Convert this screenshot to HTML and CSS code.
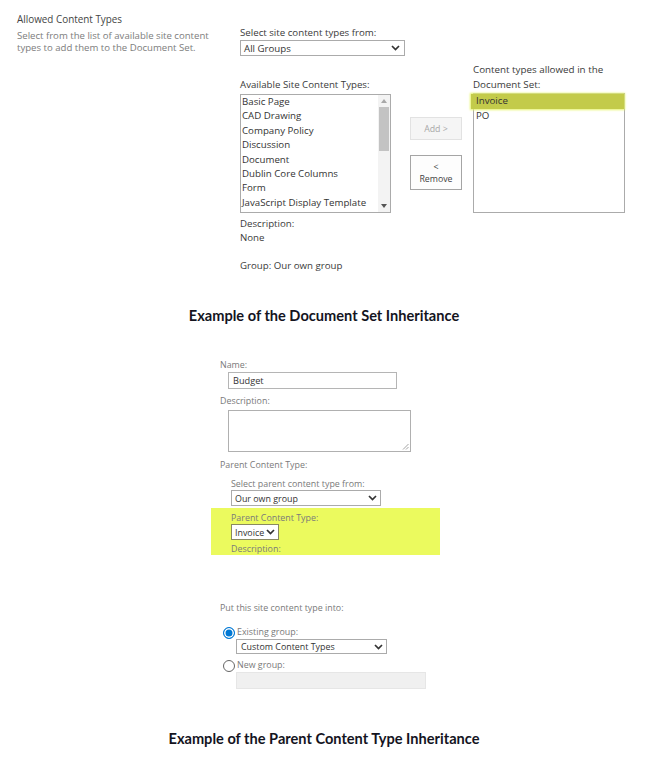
FILE: index.html
```html
<!DOCTYPE html>
<html lang="en">
<head>
<meta charset="utf-8">
<title>Content Type Inheritance</title>
<link rel="stylesheet" href="styles.css">
</head>
<body>
<div class="page">
  <section class="top">
    <div class="intro">
      <div class="intro-title">Allowed Content Types</div>
      <div class="intro-desc">Select from the list of available site content<br>types to add them to the Document Set.</div>
    </div>
    <div class="avail">
      <div class="lbl">Select site content types from:</div>
      <div class="select sel-groups"><span>All Groups</span>
        <svg class="chev" width="9" height="6" viewBox="0 0 9 6"><path d="M1 1 L4.5 4.5 L8 1" fill="none" stroke="#333" stroke-width="1.7"/></svg>
      </div>
      <div class="lbl lbl-avail">Available Site Content Types:</div>
      <div class="listbox lb-avail">
        <div class="lb-items">
          <div class="opt">Basic Page</div>
          <div class="opt">CAD Drawing</div>
          <div class="opt">Company Policy</div>
          <div class="opt">Discussion</div>
          <div class="opt">Document</div>
          <div class="opt">Dublin Core Columns</div>
          <div class="opt">Form</div>
          <div class="opt">JavaScript Display Template</div>
        </div>
        <div class="scrollbar">
          <svg class="arrow" width="6" height="4" viewBox="0 0 6 4"><path d="M0 4 L3 0 L6 4 Z" fill="#a8a8a8"/></svg>
          <div class="track"><div class="thumb"></div></div>
          <svg class="arrow" width="6" height="4" viewBox="0 0 6 4"><path d="M0 0 L3 4 L6 0 Z" fill="#555"/></svg>
        </div>
      </div>
      <div class="meta">Description:<br>None<br><br>Group: Our own group</div>
    </div>
    <div class="buttons">
      <div class="btn btn-disabled">Add &gt;</div>
      <div class="btn btn-remove">&lt;<br>Remove</div>
    </div>
    <div class="allowed">
      <div class="lbl2">Content types allowed in the<br>Document Set:</div>
      <div class="listbox lb-allowed">
        <div class="opt hl">Invoice</div>
        <div class="opt">PO</div>
      </div>
    </div>
  </section>

  <div class="caption cap1">Example of the Document Set Inheritance</div>

  <section class="panel">
    <div class="plbl">Name:</div>
    <div class="input name-input">Budget</div>
    <div class="plbl desc-lbl">Description:</div>
    <div class="textarea">
      <svg class="grip" width="7" height="7" viewBox="0 0 7 7"><path d="M6.5 1 L1 6.5 M6.5 4 L4 6.5" stroke="#999" stroke-width="0.9"/></svg>
    </div>
    <div class="plbl pct-lbl">Parent Content Type:</div>
    <div class="sub">
      <div class="plbl spl-lbl">Select parent content type from:</div>
      <div class="select sel-parent"><span>Our own group</span>
        <svg class="chev" width="9" height="6" viewBox="0 0 9 6"><path d="M1 1 L4.5 4.5 L8 1" fill="none" stroke="#333" stroke-width="1.7"/></svg>
      </div>
    </div>
    <div class="mark">
      <div class="plbl mk-lbl">Parent Content Type:</div>
      <div class="select sel-invoice"><span>Invoice</span>
        <svg class="chev" width="9" height="6" viewBox="0 0 9 6"><path d="M1 1 L4.5 4.5 L8 1" fill="none" stroke="#333" stroke-width="1.7"/></svg>
      </div>
      <div class="plbl mk-desc">Description:</div>
    </div>
    <div class="plbl put-lbl">Put this site content type into:</div>
    <div class="radio-row row1"><span class="radio checked"></span><span class="plbl">Existing group:</span></div>
    <div class="select sel-custom"><span>Custom Content Types</span>
      <svg class="chev" width="9" height="6" viewBox="0 0 9 6"><path d="M1 1 L4.5 4.5 L8 1" fill="none" stroke="#333" stroke-width="1.7"/></svg>
    </div>
    <div class="radio-row row2"><span class="radio"></span><span class="plbl">New group:</span></div>
    <div class="input new-input"></div>
  </section>

  <div class="caption cap2">Example of the Parent Content Type Inheritance</div>
</div>
</body>
</html>
```

FILE: styles.css
```css
* { box-sizing: border-box; }
html, body { margin: 0; padding: 0; background: #fff; }
body {
  font-family: "Open Sans", "Noto Sans", sans-serif;
  color: #444;
  width: 648px;
  height: 758px;
  overflow: hidden;
}

.top {
  display: flex;
  align-items: flex-start;
  padding: 12px 0 0 17px;
  height: 273px;
}

.intro { width: 223px; }
.intro-title {
  font-size: 9.9px;
  line-height: 14px;
  color: #444;
  white-space: nowrap;
}
.intro-desc {
  margin-top: 4px;
  font-size: 9.6px;
  line-height: 12px;
  color: #7d7d7d;
  white-space: nowrap;
}

.avail { width: 165px; padding-top: 14px; }
.lbl {
  font-size: 9.7px;
  line-height: 14px;
  color: #3a3a3a;
  white-space: nowrap;
}
.lbl-avail { margin-top: 22px; }

.select {
  display: flex;
  align-items: center;
  justify-content: space-between;
  border: 1px solid #ababab;
  background: #fff;
  font-size: 9.7px;
  color: #333;
  white-space: nowrap;
}
.sel-groups { height: 16px; padding: 0 4px 0 3px; }

.listbox {
  border: 1px solid #ababab;
  background: #fff;
  font-size: 9.7px;
  color: #333;
}
.lb-avail {
  margin-top: 2px;
  width: 151px;
  height: 119px;
  display: flex;
  justify-content: space-between;
  overflow: hidden;
}
.lb-items { padding-left: 1px; min-width: 0; }
.opt { line-height: 14.4px; white-space: nowrap; }

.scrollbar {
  flex: none;
  width: 12px;
  background: #f3f3f3;
  display: flex;
  flex-direction: column;
  align-items: center;
  padding: 4px 0 4px;
}
.arrow { flex: none; }
.track { flex: 1; width: 100%; padding: 4px 1px 0; }
.thumb { height: 44px; background: #c3c3c3; }

.meta {
  margin-top: 4px;
  font-size: 9.7px;
  line-height: 14px;
  color: #3a3a3a;
}

.buttons {
  width: 52px;
  margin-left: 5px;
  padding-top: 105px;
}
.btn {
  display: flex;
  align-items: center;
  justify-content: center;
  text-align: center;
  font-size: 8.8px;
  border: 1px solid #a5a5a5;
  background: #fdfdfd;
  color: #444;
}
.btn-disabled {
  height: 23px;
  border-color: #e2e2e2;
  background: #f5f5f5;
  color: #a8a8a8;
}
.btn-remove {
  margin-top: 15px;
  height: 35px;
  line-height: 12px;
}

.allowed {
  width: 152px;
  margin-left: 11px;
  padding-top: 50px;
}
.lbl2 {
  font-size: 9.8px;
  line-height: 15px;
  color: #3a3a3a;
  white-space: nowrap;
}
.lb-allowed {
  margin-top: 1px;
  height: 120px;
  padding: 0;
}
.lb-allowed .opt { padding-left: 2px; line-height: 14.5px; }
.opt.hl {
  background: #c3cb4a;
  margin-left: -3px;
  padding-left: 5px;
  box-shadow: 0 0 2px 1px #e6f46a;
  color: #333;
}

.caption {
  font-family: "Lato", "Open Sans", sans-serif;
  font-weight: 700;
  font-size: 14.6px;
  line-height: 18px;
  color: #14141e;
  text-align: center;
}
.cap1 { margin-top: 34px; }

.panel {
  width: 230px;
  margin: 25px 0 0 210px;
  padding-top: 8px;
}
.plbl {
  font-size: 8.9px;
  line-height: 13px;
  color: #7a7a7a;
  white-space: nowrap;
  display: block;
}
.panel > .plbl { padding-left: 10px; }
.input {
  border: 1px solid #b5b5b5;
  background: #fff;
  font-size: 9.2px;
  color: #333;
  display: flex;
  align-items: center;
}
.name-input {
  margin: 1px 0 0 18px;
  width: 169px;
  height: 17px;
  padding-left: 4px;
}
.desc-lbl { margin-top: 5px; }
.textarea {
  margin: 3px 0 0 18px;
  width: 183px;
  height: 42px;
  border: 1px solid #b0b0b0;
  display: flex;
  justify-content: flex-end;
  align-items: flex-end;
  padding: 0 1px 1px 0;
}
.grip { display: block; }
.pct-lbl { margin-top: 6px; }
.sub { padding-left: 21px; margin-top: 6px; }
.sel-parent {
  width: 150px;
  height: 16px;
  padding: 0 3px 0 3px;
  font-size: 8.9px;
}
.mark {
  margin: 2px 0 0 1px;
  width: 229px;
  height: 47px;
  background: #ebfa5e;
  padding: 4px 0 0 20px;
}
.mk-lbl { line-height: 12px; }
.sel-invoice {
  width: 48px;
  height: 16px;
  padding: 0 3px 0 3px;
  font-size: 8.9px;
  border-color: #8a8a60;
}
.mk-desc { margin-top: 3px; line-height: 12px; }

.put-lbl { margin-top: 46px; }
.radio-row {
  display: flex;
  align-items: flex-start;
  padding-left: 13px;
}
.row1 { margin-top: 11px; }
.row2 { margin-top: 4px; }
.radio {
  flex: none;
  width: 12px;
  height: 12px;
  border-radius: 50%;
  border: 1px solid #666;
  background: #fff;
  margin: 2px 2px 0 0;
}
.radio.checked {
  border-color: #0078d4;
  background: #0078d4;
  box-shadow: inset 0 0 0 1.5px #fff;
}
.sel-custom {
  margin-left: 26px;
  width: 151px;
  height: 15px;
  padding: 0 3px 0 4px;
  font-size: 8.9px;
}
.new-input {
  margin-left: 26px;
  width: 190px;
  height: 17px;
  background: #f0f0f0;
  border-color: #e6e6e6;
}
.cap2 { margin-top: 41px; }
```
